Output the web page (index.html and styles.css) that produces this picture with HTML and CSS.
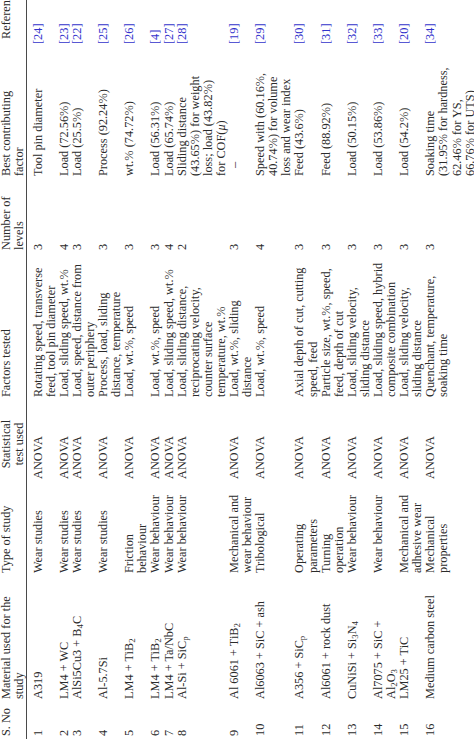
FILE: index.html
```html
<!DOCTYPE html>
<html lang="en">
<head>
<meta charset="utf-8">
<title>Table</title>
<link rel="stylesheet" href="styles.css">
</head>
<body>
<div class="page">
  <div class="rot">
    <div class="tbl">
      <div class="row head">
        <div>S. No</div>
        <div>Material used for the<br>study</div>
        <div>Type of study</div>
        <div class="stat-h">Statistical<br>test used</div>
        <div>Factors tested</div>
        <div>Number of<br>levels</div>
        <div>Best contributing<br>factor</div>
        <div class="ref-h">References</div>
      </div>
      <div class="rule"></div>
      <div class="body">
        <div class="row">
          <div>1</div><div>A319</div><div>Wear studies</div><div class="an">ANOVA</div>
          <div>Rotating speed, transverse<br>feed, tool pin diameter</div><div>3</div>
          <div>Tool pin diameter</div><div class="ref">[24]</div>
        </div>
        <div class="row">
          <div>2</div><div>LM4 + WC</div><div>Wear studies</div><div class="an">ANOVA</div>
          <div>Load, sliding speed, wt.%</div><div>4</div>
          <div>Load (72.56%)</div><div class="ref">[23]</div>
        </div>
        <div class="row">
          <div>3</div><div>AlSi5Cu3 + B<span class="sub">4</span>C</div><div>Wear studies</div><div class="an">ANOVA</div>
          <div>Load, speed, distance from<br>outer periphery</div><div>3</div>
          <div>Load (25.5%)</div><div class="ref">[22]</div>
        </div>
        <div class="row">
          <div>4</div><div>Al-5.7Si</div><div>Wear studies</div><div class="an">ANOVA</div>
          <div>Process, load, sliding<br>distance, temperature</div><div>3</div>
          <div>Process (92.24%)</div><div class="ref">[25]</div>
        </div>
        <div class="row">
          <div>5</div><div>LM4 + TiB<span class="sub">2</span></div><div>Friction<br>behaviour</div><div class="an">ANOVA</div>
          <div>Load, wt.%, speed</div><div>3</div>
          <div>wt.% (74.72%)</div><div class="ref">[26]</div>
        </div>
        <div class="row">
          <div>6</div><div>LM4 + TiB<span class="sub">2</span></div><div>Wear behaviour</div><div class="an">ANOVA</div>
          <div>Load, wt.%, speed</div><div>3</div>
          <div>Load (56.31%)</div><div class="ref">[4]</div>
        </div>
        <div class="row">
          <div>7</div><div>LM4 + Ta/NbC</div><div>Wear behaviour</div><div class="an">ANOVA</div>
          <div>Load, sliding speed, wt.%</div><div>4</div>
          <div>Load (65.74%)</div><div class="ref">[27]</div>
        </div>
        <div class="row">
          <div>8</div><div>Al-Si + SiC<span class="sub">p</span></div><div>Wear behaviour</div><div class="an">ANOVA</div>
          <div>Load, sliding distance,<br>reciprocating velocity,<br>counter surface<br>temperature, wt.%</div><div>2</div>
          <div>Sliding distance<br>(43.65%) for weight<br>loss; load (43.82%)<br>for COF(<i>μ</i>)</div><div class="ref">[28]</div>
        </div>
        <div class="row">
          <div>9</div><div>Al 6061 + TiB<span class="sub">2</span></div><div>Mechanical and<br>wear behaviour</div><div class="an">ANOVA</div>
          <div>Load, wt.%, sliding<br>distance</div><div>3</div>
          <div class="dash">–</div><div class="ref">[19]</div>
        </div>
        <div class="row">
          <div>10</div><div>Al6063 + SiC + ash</div><div>Tribological</div><div class="an">ANOVA</div>
          <div>Load, wt.%, speed</div><div>4</div>
          <div>Speed with (60.16%,<br>40.74%) for volume<br>loss and wear index</div><div class="ref">[29]</div>
        </div>
        <div class="row">
          <div>11</div><div>A356 + SiC<span class="sub">p</span></div><div>Operating<br>parameters</div><div class="an">ANOVA</div>
          <div>Axial depth of cut, cutting<br>speed, feed</div><div>3</div>
          <div>Feed (43.6%)</div><div class="ref">[30]</div>
        </div>
        <div class="row">
          <div>12</div><div>Al6061 + rock dust</div><div>Turning<br>operation</div><div class="an">ANOVA</div>
          <div>Particle size, wt.%, speed,<br>feed, depth of cut</div><div>3</div>
          <div>Feed (88.92%)</div><div class="ref">[31]</div>
        </div>
        <div class="row">
          <div>13</div><div>CuNiSi + Si<span class="sub">3</span>N<span class="sub">4</span></div><div>Wear behaviour</div><div class="an">ANOVA</div>
          <div>Load, sliding velocity,<br>sliding distance</div><div>3</div>
          <div>Load (50.15%)</div><div class="ref">[32]</div>
        </div>
        <div class="row">
          <div>14</div><div>Al7075 + SiC +<br>Al<span class="sub">2</span>O<span class="sub">3</span></div><div>Wear behaviour</div><div class="an">ANOVA</div>
          <div>Load, sliding speed, hybrid<br>composite combination</div><div>3</div>
          <div>Load (53.86%)</div><div class="ref">[33]</div>
        </div>
        <div class="row">
          <div>15</div><div>LM25 + TiC</div><div>Mechanical and<br>adhesive wear</div><div class="an">ANOVA</div>
          <div>Load, sliding velocity,<br>sliding distance</div><div>3</div>
          <div>Load (54.2%)</div><div class="ref">[20]</div>
        </div>
        <div class="row">
          <div>16</div><div>Medium carbon steel</div><div>Mechanical<br>properties</div><div class="an">ANOVA</div>
          <div>Quenchant, temperature,<br>soaking time</div><div>3</div>
          <div>Soaking time<br>(31.95% for hardness,<br>62.46% for YS,<br>66.76% for UTS)</div><div class="ref">[34]</div>
        </div>
      </div>
    </div>
  </div>
</div>
</body>
</html>
```

FILE: styles.css
```css
html, body {
  margin: 0;
  padding: 0;
  background: #ffffff;
  overflow: hidden;
}

.page {
  width: 474px;
  height: 740px;
  overflow: hidden;
}

.rot {
  width: 740px;
  height: 474px;
  transform-origin: 0 0;
  transform: translateY(740px) rotate(-90deg);
}

.tbl {
  padding-left: 3px;
  margin-top: -1.5px;
  font-family: "Liberation Serif", "Times New Roman", serif;
  font-size: 12.3px;
  line-height: 13.1px;
  color: #2b2b2b;
}

.row {
  display: grid;
  grid-template-columns: 37px 126px 92px 84px 147px 74px 132px 80px;
  white-space: nowrap;
}

.stat-h {
  text-align: center;
  padding-right: 10px;
}

.an {
  padding-left: 2px;
}

.ref-h {
  padding-left: 5px;
}

.rule {
  height: 0;
  border-top: 1.4px solid #4a4a4a;
  width: 740px;
  margin-left: -3px;
}

.body {
  padding-top: 4.4px;
}

.ref {
  color: #3333cc;
}

.dash {
  padding-left: 8px;
}

.sub {
  font-size: 0.72em;
  line-height: 0;
  vertical-align: -0.28em;
}
```
